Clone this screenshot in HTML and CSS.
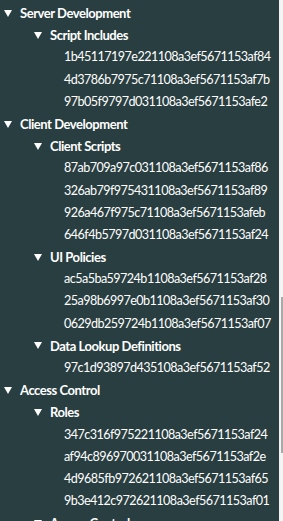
FILE: index.html
```html
<!DOCTYPE html>
<html lang="en">
<head>
    <meta charset="UTF-8">
    <meta name="viewport" content="width=device-width, initial-scale=1.0">
    <title>Application Files</title>
    <link rel="stylesheet" href="styles.css">
</head>
<body>

<div class="panel">
    <nav class="tree">
        <ul class="level">
            <li>
                <div class="node"><span class="caret"></span>Server Development</div>
                <ul class="level">
                    <li>
                        <div class="node"><span class="caret"></span>Script Includes</div>
                        <ul class="level">
                            <li class="leaf">1b45117197e221108a3ef5671153af84</li>
                            <li class="leaf">4d3786b7975c71108a3ef5671153af7b</li>
                            <li class="leaf">97b05f9797d031108a3ef5671153afe2</li>
                        </ul>
                    </li>
                </ul>
            </li>
            <li>
                <div class="node"><span class="caret"></span>Client Development</div>
                <ul class="level">
                    <li>
                        <div class="node"><span class="caret"></span>Client Scripts</div>
                        <ul class="level">
                            <li class="leaf">87ab709a97c031108a3ef5671153af86</li>
                            <li class="leaf">326ab79f975431108a3ef5671153af89</li>
                            <li class="leaf">926a467f975c71108a3ef5671153afeb</li>
                            <li class="leaf">646f4b5797d031108a3ef5671153af24</li>
                        </ul>
                    </li>
                    <li>
                        <div class="node"><span class="caret"></span>UI Policies</div>
                        <ul class="level">
                            <li class="leaf">ac5a5ba59724b1108a3ef5671153af28</li>
                            <li class="leaf">25a98b6997e0b1108a3ef5671153af30</li>
                            <li class="leaf">0629db259724b1108a3ef5671153af07</li>
                        </ul>
                    </li>
                    <li>
                        <div class="node"><span class="caret"></span>Data Lookup Definitions</div>
                        <ul class="level">
                            <li class="leaf">97c1d93897d435108a3ef5671153af52</li>
                        </ul>
                    </li>
                </ul>
            </li>
            <li>
                <div class="node"><span class="caret"></span>Access Control</div>
                <ul class="level">
                    <li>
                        <div class="node"><span class="caret"></span>Roles</div>
                        <ul class="level">
                            <li class="leaf">347c316f975221108a3ef5671153af24</li>
                            <li class="leaf">af94c896970031108a3ef5671153af2e</li>
                            <li class="leaf">4d9685fb972621108a3ef5671153af65</li>
                            <li class="leaf">9b3e412c972621108a3ef5671153af01</li>
                        </ul>
                    </li>
                    <li>
                        <div class="node"><span class="caret"></span>Access Controls</div>
                    </li>
                </ul>
            </li>
        </ul>
    </nav>
    <div class="scrollbar">
        <div class="thumb"></div>
    </div>
</div>

</body>
</html>
```

FILE: styles.css
```css
:root {
    --panel-color: #293e40;
    --text-color: #ffffff;
    --track-color: #f4f4f4;
    --thumb-color: #a9a9a9;
    --row-height: 22.2px;
}

body, html {
    height: 100%;
    margin: 0;
    overflow: hidden;
    background-color: var(--track-color);
    font-family: Lato, "Open Sans", Arial, sans-serif;
}

.panel {
    display: flex;
    height: 100%;
}

.tree {
    flex: 1;
    background-color: var(--panel-color);
    color: var(--text-color);
    padding: 2px 0 0 4px;
    overflow: hidden;
}

.level {
    list-style: none;
    margin: 0;
    padding: 0;
}

.level .level {
    padding-left: 30px;
}

.node,
.leaf {
    height: var(--row-height);
    line-height: var(--row-height);
    font-size: 12.5px;
    white-space: nowrap;
}

.node {
    display: flex;
    align-items: center;
    gap: 8px;
    font-size: 13px;
    font-weight: 700;
    letter-spacing: -0.45px;
}

.leaf {
    font-size: 12.6px;
    letter-spacing: -0.55px;
}

.caret {
    width: 0;
    height: 0;
    border-left: 4px solid transparent;
    border-right: 4px solid transparent;
    border-top: 7px solid var(--text-color);
}

.scrollbar {
    width: 4px;
    background-color: var(--track-color);
}

.thumb {
    width: 2px;
    height: 156px;
    margin: 297px 0 0 2px;
    background-color: var(--thumb-color);
}
```
